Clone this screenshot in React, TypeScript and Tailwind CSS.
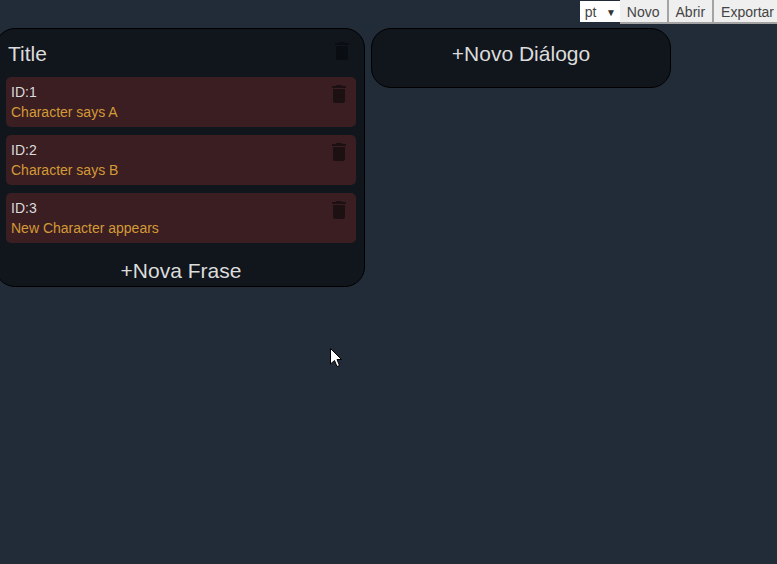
import { MdDelete } from "react-icons/md";

const phrases = [
  { id: 1, text: "Character says A" },
  { id: 2, text: "Character says B" },
  { id: 3, text: "New Character appears" },
];

function TopButton({ label }: { label: string }) {
  return (
    <button
      type="button"
      className="h-[24px] shrink-0 border-r-2 border-b-2 border-[#a3a3a3] bg-[#efefef] px-[7px] pt-[1px] text-[14px] leading-none text-[#444]"
    >
      {label}
    </button>
  );
}

function Phrase({ id, text }: { id: number; text: string }) {
  return (
    <div className="flex h-[50px] w-[350px] items-start justify-between rounded-[5px] bg-[#3a1e21] px-[5px]">
      <div className="pt-[5px] text-[14px] leading-[20px]">
        <div className="text-[#dcdcdc]">ID:{id}</div>
        <div className="text-[#d49a38]">{text}</div>
      </div>
      <MdDelete className="mt-[5px] text-[#1c1013]" size={24} />
    </div>
  );
}

export default function App() {
  return (
    <div className="relative h-[564px] w-[777px] overflow-hidden bg-[#222b38] font-['Liberation_Sans',Arial,sans-serif]">
      <div className="-mr-[6px] flex h-[24px] items-start justify-end">
        <div className="mt-[1px] flex h-[21px] w-[40px] items-center justify-between bg-white pl-[5px] pr-[4px] pt-[1px] text-[14px] text-[#444]">
          <span>pt</span>
          <span className="text-[10px] text-[#333]">▼</span>
        </div>
        <TopButton label="Novo" />
        <TopButton label="Abrir" />
        <TopButton label="Exportar" />
      </div>
      <div className="mt-[4px] flex items-start gap-[6px]">
        <div className="-ml-[5px] flex h-[259px] w-[370px] flex-col rounded-[20px] border border-black bg-[#11161d] pl-[10px]">
          <div className="flex h-[48px] items-start justify-between pr-[10px]">
            <span className="pl-[2px] pt-[13px] text-[21px] leading-[24px] text-[#dcdcdc]">Title</span>
            <MdDelete className="mt-[10px] text-[#0a0d12]" size={24} />
          </div>
          <div className="flex flex-col gap-[8px]">
            {phrases.map((p) => (
              <Phrase key={p.id} id={p.id} text={p.text} />
            ))}
          </div>
          <div className="pr-[8px] pt-[16px] text-center text-[21px] leading-[24px] text-[#dcdcdc]">+Nova Frase</div>
        </div>
        <div className="flex h-[60px] w-[300px] justify-center rounded-[20px] border border-black bg-[#11161d] pt-[13px] text-[21px] leading-[24px] text-[#dcdcdc]">
          +Novo Diálogo
        </div>
      </div>
      {/* mouse cursor caught in the capture */}
      <svg className="absolute left-[330px] top-[348px]" width="13" height="20" viewBox="0 0 13 20">
        <path d="M0.5 0.5 L0.5 16 L4.5 12.5 L7 18.5 L9.5 17.5 L7 11.5 L11.5 11.5 Z" fill="#fff" stroke="#000" strokeWidth="1" />
      </svg>
    </div>
  );
}
